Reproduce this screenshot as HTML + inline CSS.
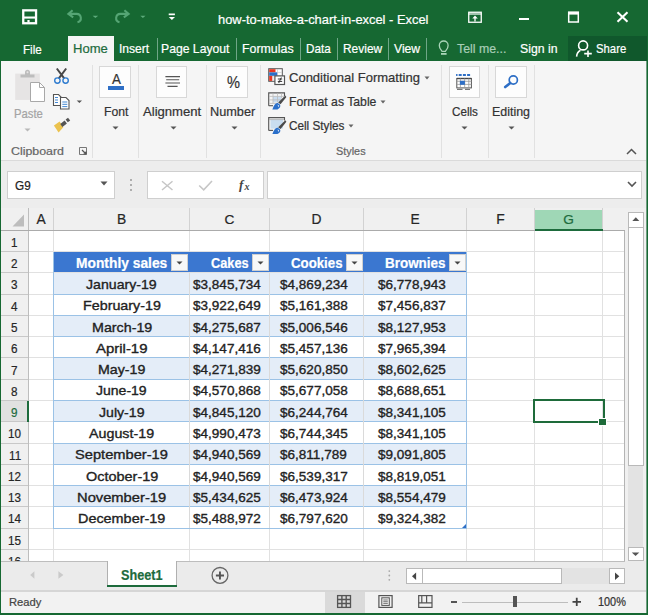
<!DOCTYPE html><html><head><meta charset="utf-8"><style>
html,body{margin:0;padding:0;width:648px;height:615px;overflow:hidden;background:#F3F3F3;}
body{position:relative;font-family:"Liberation Sans",sans-serif;}
span{white-space:pre;line-height:1;transform-origin:0 0;-webkit-text-stroke:0.22px currentColor;}
div,svg{position:absolute;}
</style></head><body>
<div style="position:absolute;left:0px;top:0px;width:648px;height:61px;background:#166832;"></div>
<span style="position:absolute;left:217.70px;top:14.20px;font-size:12.83px;color:#fff;transform:scaleX(1.0040);">how-to-make-a-chart-in-excel - Excel</span>
<div style="position:absolute;left:518.6px;top:17.8px;width:10.5px;height:2.599999999999998px;background:#fff;"></div>
<div style="position:absolute;left:68px;top:36px;width:46px;height:26px;background:#F5F5F5;"></div>
<span style="position:absolute;left:23.00px;top:43.00px;font-size:13.60px;color:#fff;transform:scaleX(0.8573);">File</span>
<span style="position:absolute;left:73.00px;top:42.00px;font-size:13.60px;color:#1D6B3C;transform:scaleX(0.9593);">Home</span>
<span style="position:absolute;left:119.30px;top:42.00px;font-size:13.60px;color:#fff;transform:scaleX(0.8882);">Insert</span>
<span style="position:absolute;left:161.20px;top:42.00px;font-size:13.60px;color:#fff;transform:scaleX(0.8970);">Page Layout</span>
<span style="position:absolute;left:241.70px;top:42.00px;font-size:13.60px;color:#fff;transform:scaleX(0.9104);">Formulas</span>
<span style="position:absolute;left:305.60px;top:42.00px;font-size:13.60px;color:#fff;transform:scaleX(0.8597);">Data</span>
<span style="position:absolute;left:342.70px;top:42.00px;font-size:13.60px;color:#fff;transform:scaleX(0.8781);">Review</span>
<span style="position:absolute;left:393.60px;top:42.00px;font-size:13.60px;color:#fff;transform:scaleX(0.8950);">View</span>
<div style="position:absolute;left:156.5px;top:38px;width:1.0px;height:22px;background:#6FA687;"></div>
<div style="position:absolute;left:236px;top:38px;width:1px;height:22px;background:#6FA687;"></div>
<div style="position:absolute;left:300.4px;top:38px;width:1.0px;height:22px;background:#6FA687;"></div>
<div style="position:absolute;left:336.5px;top:38px;width:1.0px;height:22px;background:#6FA687;"></div>
<div style="position:absolute;left:388px;top:38px;width:1px;height:22px;background:#6FA687;"></div>
<div style="position:absolute;left:425.8px;top:38px;width:1.0px;height:22px;background:#6FA687;"></div>
<span style="position:absolute;left:456.50px;top:42.00px;font-size:13.60px;color:#A8CDB6;transform:scaleX(0.9081);">Tell me...</span>
<span style="position:absolute;left:519.60px;top:42.00px;font-size:13.60px;color:#fff;transform:scaleX(0.9042);">Sign in</span>
<div style="position:absolute;left:568px;top:36px;width:79px;height:25px;background:#10582C;"></div>
<span style="position:absolute;left:596.30px;top:42.00px;font-size:13.60px;color:#fff;transform:scaleX(0.8325);">Share</span>
<div style="position:absolute;left:0px;top:61px;width:648px;height:554px;background:#F5F5F5;"></div>
<div style="position:absolute;left:0px;top:61px;width:1px;height:554px;background:#166832;"></div>
<div style="position:absolute;left:646px;top:61px;width:1px;height:554px;background:#6E9E80;"></div>
<div style="position:absolute;left:647px;top:61px;width:1px;height:554px;background:#166832;"></div>
<div style="position:absolute;left:0px;top:613px;width:648px;height:2px;background:#166832;"></div>
<span style="position:absolute;left:13.50px;top:106.50px;font-size:13.20px;color:#A4A4A4;transform:scaleX(0.8561);">Paste</span>
<svg style="position:absolute;left:24px;top:128px" width="7" height="4" viewBox="0 0 7 4"><path d="M0.5 0.5h6l-3 3z" fill="#B8B8B8"/></svg>
<span style="position:absolute;left:11.20px;top:144.50px;font-size:11.70px;color:#666;transform:scaleX(1.0584);">Clipboard</span>
<svg style="position:absolute;left:79px;top:147px" width="8" height="8" viewBox="0 0 8 8"><path d="M0.5 0.5h7v7h-7z" fill="none" stroke="#777" stroke-width="1"/><path d="M3 3l4 4M4.5 7h2.5v-2.5" fill="none" stroke="#555" stroke-width="1.2"/></svg>
<div style="position:absolute;left:91.5px;top:65px;width:1.0px;height:93px;background:#E1E1E1;"></div>
<div style="position:absolute;left:138px;top:65px;width:1px;height:93px;background:#E1E1E1;"></div>
<div style="position:absolute;left:206px;top:65px;width:1px;height:93px;background:#E1E1E1;"></div>
<div style="position:absolute;left:260px;top:65px;width:1px;height:93px;background:#E1E1E1;"></div>
<div style="position:absolute;left:440.5px;top:65px;width:1.0px;height:93px;background:#E1E1E1;"></div>
<div style="position:absolute;left:487.5px;top:65px;width:1.0px;height:93px;background:#E1E1E1;"></div>
<div style="position:absolute;left:534px;top:65px;width:1px;height:93px;background:#E1E1E1;"></div>
<div style="position:absolute;left:99px;top:66px;width:32px;height:32px;background:#FDFDFD;border:1px solid #D8D8D8;box-sizing:border-box;"></div>
<span style="position:absolute;left:112.00px;top:71.40px;font-size:15.42px;color:#333;transform:scaleX(0.8648);">A</span>
<div style="position:absolute;left:107.6px;top:86.3px;width:16.900000000000006px;height:3.700000000000003px;background:#2E6FC6;"></div>
<span style="position:absolute;left:103.80px;top:104.80px;font-size:13.20px;color:#333;transform:scaleX(0.9242);">Font</span>
<svg style="position:absolute;left:112px;top:126px" width="7" height="4" viewBox="0 0 7 4"><path d="M0.5 0.5h6l-3 3z" fill="#555"/></svg>
<div style="position:absolute;left:155.5px;top:66px;width:31.0px;height:32px;background:#FDFDFD;border:1px solid #D8D8D8;box-sizing:border-box;"></div>
<span style="position:absolute;left:142.80px;top:104.70px;font-size:13.20px;color:#333;transform:scaleX(0.9931);">Alignment</span>
<svg style="position:absolute;left:170px;top:126px" width="7" height="4" viewBox="0 0 7 4"><path d="M0.5 0.5h6l-3 3z" fill="#555"/></svg>
<div style="position:absolute;left:216px;top:66px;width:32px;height:32px;background:#FDFDFD;border:1px solid #D8D8D8;box-sizing:border-box;"></div>
<span style="position:absolute;left:227.20px;top:75.00px;font-size:16.83px;color:#333;transform:scaleX(0.8677);">%</span>
<span style="position:absolute;left:210.40px;top:104.70px;font-size:13.20px;color:#333;transform:scaleX(0.9647);">Number</span>
<svg style="position:absolute;left:230.5px;top:126px" width="7" height="4" viewBox="0 0 7 4"><path d="M0.5 0.5h6l-3 3z" fill="#555"/></svg>
<span style="position:absolute;left:288.90px;top:70.80px;font-size:13.00px;color:#333;transform:scaleX(1.0009);">Conditional Formatting</span>
<svg style="position:absolute;left:423.5px;top:76px" width="6" height="4" viewBox="0 0 6 4"><path d="M0.5 0.5h5l-2.5 3z" fill="#666"/></svg>
<span style="position:absolute;left:288.90px;top:95.10px;font-size:13.00px;color:#333;transform:scaleX(0.9400);">Format as Table</span>
<svg style="position:absolute;left:380px;top:100px" width="6" height="4" viewBox="0 0 6 4"><path d="M0.5 0.5h5l-2.5 3z" fill="#666"/></svg>
<span style="position:absolute;left:288.90px;top:119.40px;font-size:13.00px;color:#333;transform:scaleX(0.9035);">Cell Styles</span>
<svg style="position:absolute;left:347.5px;top:124px" width="6" height="4" viewBox="0 0 6 4"><path d="M0.5 0.5h5l-2.5 3z" fill="#666"/></svg>
<span style="position:absolute;left:335.80px;top:144.90px;font-size:11.70px;color:#666;transform:scaleX(0.9293);">Styles</span>
<div style="position:absolute;left:448.5px;top:66px;width:31.5px;height:32px;background:#FDFDFD;border:1px solid #D8D8D8;box-sizing:border-box;"></div>
<span style="position:absolute;left:451.70px;top:104.60px;font-size:13.20px;color:#333;transform:scaleX(0.8828);">Cells</span>
<svg style="position:absolute;left:461px;top:126px" width="7" height="4" viewBox="0 0 7 4"><path d="M0.5 0.5h6l-3 3z" fill="#555"/></svg>
<div style="position:absolute;left:495px;top:66px;width:32px;height:32px;background:#FDFDFD;border:1px solid #D8D8D8;box-sizing:border-box;"></div>
<span style="position:absolute;left:492.00px;top:104.60px;font-size:13.20px;color:#333;transform:scaleX(0.9415);">Editing</span>
<svg style="position:absolute;left:508px;top:126px" width="7" height="4" viewBox="0 0 7 4"><path d="M0.5 0.5h6l-3 3z" fill="#555"/></svg>
<svg style="position:absolute;left:626px;top:148px" width="11" height="7" viewBox="0 0 11 7"><path d="M1 6l4.5-4.5L10 6" fill="none" stroke="#555" stroke-width="1.5"/></svg>
<div style="position:absolute;left:1px;top:160px;width:645px;height:1px;background:#DADADA;"></div>
<div style="position:absolute;left:1px;top:161px;width:645px;height:47px;background:#EDEDED;"></div>
<div style="position:absolute;left:7px;top:171px;width:108px;height:28px;background:#fff;border:1px solid #CFCFCF;box-sizing:border-box;"></div>
<span style="position:absolute;left:14.60px;top:179.40px;font-size:13.33px;color:#222;transform:scaleX(0.8820);">G9</span>
<svg style="position:absolute;left:100px;top:181px" width="8" height="5" viewBox="0 0 8 5"><path d="M0.5 0.5h7l-3.5 4z" fill="#555"/></svg>
<svg style="position:absolute;left:129px;top:178px" width="4" height="14" viewBox="0 0 4 14"><circle cx="2" cy="2" r="1" fill="#999"/><circle cx="2" cy="7" r="1" fill="#999"/><circle cx="2" cy="12" r="1" fill="#999"/></svg>
<div style="position:absolute;left:147px;top:171px;width:117px;height:28px;background:#fff;border:1px solid #CFCFCF;box-sizing:border-box;"></div>
<span style="position:absolute;left:239px;top:178px;font-family:'Liberation Serif';font-style:italic;font-weight:bold;font-size:13px;color:#444;-webkit-text-stroke:0;">f</span><span style="position:absolute;left:244.5px;top:182px;font-family:'Liberation Serif';font-style:italic;font-weight:bold;font-size:10px;color:#444;-webkit-text-stroke:0;">x</span>
<div style="position:absolute;left:267px;top:171px;width:375px;height:28px;background:#fff;border:1px solid #CFCFCF;box-sizing:border-box;"></div>
<svg style="position:absolute;left:627px;top:181px" width="10" height="7" viewBox="0 0 10 7"><path d="M1 1l4 4 4-4" fill="none" stroke="#555" stroke-width="1.6"/></svg>
<div style="position:absolute;left:1px;top:230px;width:623px;height:331px;background:#fff;"></div>
<div style="position:absolute;left:1px;top:208px;width:645px;height:22px;background:#F0F0F0;"></div>
<div style="position:absolute;left:1px;top:230px;width:27px;height:331px;background:#F0F0F0;"></div>
<div style="position:absolute;left:53px;top:231px;width:1px;height:330px;background:#E1E1E1;"></div>
<div style="position:absolute;left:53px;top:208px;width:1px;height:22px;background:#D2D2D2;"></div>
<div style="position:absolute;left:189px;top:231px;width:1px;height:330px;background:#E1E1E1;"></div>
<div style="position:absolute;left:189px;top:208px;width:1px;height:22px;background:#D2D2D2;"></div>
<div style="position:absolute;left:269px;top:231px;width:1px;height:330px;background:#E1E1E1;"></div>
<div style="position:absolute;left:269px;top:208px;width:1px;height:22px;background:#D2D2D2;"></div>
<div style="position:absolute;left:363px;top:231px;width:1px;height:330px;background:#E1E1E1;"></div>
<div style="position:absolute;left:363px;top:208px;width:1px;height:22px;background:#D2D2D2;"></div>
<div style="position:absolute;left:466px;top:231px;width:1px;height:330px;background:#E1E1E1;"></div>
<div style="position:absolute;left:466px;top:208px;width:1px;height:22px;background:#D2D2D2;"></div>
<div style="position:absolute;left:534px;top:231px;width:1px;height:330px;background:#E1E1E1;"></div>
<div style="position:absolute;left:534px;top:208px;width:1px;height:22px;background:#D2D2D2;"></div>
<div style="position:absolute;left:602px;top:231px;width:1px;height:330px;background:#E1E1E1;"></div>
<div style="position:absolute;left:602px;top:208px;width:1px;height:22px;background:#D2D2D2;"></div>
<div style="position:absolute;left:28px;top:208px;width:1px;height:353px;background:#BDBDBD;"></div>
<div style="position:absolute;left:624px;top:230px;width:1px;height:331px;background:#B4B4B4;"></div>
<div style="position:absolute;left:29px;top:251px;width:595px;height:1px;background:#E1E1E1;"></div>
<div style="position:absolute;left:1px;top:251px;width:27px;height:1px;background:#C8C8C8;"></div>
<div style="position:absolute;left:29px;top:272px;width:595px;height:1px;background:#E1E1E1;"></div>
<div style="position:absolute;left:1px;top:272px;width:27px;height:1px;background:#C8C8C8;"></div>
<div style="position:absolute;left:29px;top:294px;width:595px;height:1px;background:#E1E1E1;"></div>
<div style="position:absolute;left:1px;top:294px;width:27px;height:1px;background:#C8C8C8;"></div>
<div style="position:absolute;left:29px;top:315px;width:595px;height:1px;background:#E1E1E1;"></div>
<div style="position:absolute;left:1px;top:315px;width:27px;height:1px;background:#C8C8C8;"></div>
<div style="position:absolute;left:29px;top:336px;width:595px;height:1px;background:#E1E1E1;"></div>
<div style="position:absolute;left:1px;top:336px;width:27px;height:1px;background:#C8C8C8;"></div>
<div style="position:absolute;left:29px;top:357px;width:595px;height:1px;background:#E1E1E1;"></div>
<div style="position:absolute;left:1px;top:357px;width:27px;height:1px;background:#C8C8C8;"></div>
<div style="position:absolute;left:29px;top:379px;width:595px;height:1px;background:#E1E1E1;"></div>
<div style="position:absolute;left:1px;top:379px;width:27px;height:1px;background:#C8C8C8;"></div>
<div style="position:absolute;left:29px;top:400px;width:595px;height:1px;background:#E1E1E1;"></div>
<div style="position:absolute;left:1px;top:400px;width:27px;height:1px;background:#C8C8C8;"></div>
<div style="position:absolute;left:29px;top:421px;width:595px;height:1px;background:#E1E1E1;"></div>
<div style="position:absolute;left:1px;top:421px;width:27px;height:1px;background:#C8C8C8;"></div>
<div style="position:absolute;left:29px;top:443px;width:595px;height:1px;background:#E1E1E1;"></div>
<div style="position:absolute;left:1px;top:443px;width:27px;height:1px;background:#C8C8C8;"></div>
<div style="position:absolute;left:29px;top:464px;width:595px;height:1px;background:#E1E1E1;"></div>
<div style="position:absolute;left:1px;top:464px;width:27px;height:1px;background:#C8C8C8;"></div>
<div style="position:absolute;left:29px;top:485px;width:595px;height:1px;background:#E1E1E1;"></div>
<div style="position:absolute;left:1px;top:485px;width:27px;height:1px;background:#C8C8C8;"></div>
<div style="position:absolute;left:29px;top:506px;width:595px;height:1px;background:#E1E1E1;"></div>
<div style="position:absolute;left:1px;top:506px;width:27px;height:1px;background:#C8C8C8;"></div>
<div style="position:absolute;left:29px;top:528px;width:595px;height:1px;background:#E1E1E1;"></div>
<div style="position:absolute;left:1px;top:528px;width:27px;height:1px;background:#C8C8C8;"></div>
<div style="position:absolute;left:29px;top:549px;width:595px;height:1px;background:#E1E1E1;"></div>
<div style="position:absolute;left:1px;top:549px;width:27px;height:1px;background:#C8C8C8;"></div>
<div style="position:absolute;left:29px;top:570px;width:595px;height:1px;background:#E1E1E1;"></div>
<div style="position:absolute;left:1px;top:570px;width:27px;height:1px;background:#C8C8C8;"></div>
<div style="position:absolute;left:1px;top:230px;width:624px;height:1px;background:#ABABAB;"></div>
<svg style="position:absolute;left:12px;top:214px" width="13" height="13" viewBox="0 0 13 13"><path d="M12 0.5v12h-11.5z" fill="#BDBDBD"/></svg>
<div style="position:absolute;left:535px;top:210px;width:67px;height:20px;background:#9FD7B6;"></div>
<div style="position:absolute;left:535px;top:229px;width:68px;height:2px;background:#1D6B3C;"></div>
<div style="position:absolute;left:1px;top:401px;width:27px;height:20px;background:#E1E1E1;"></div>
<div style="position:absolute;left:27px;top:401px;width:2px;height:21px;background:#1D6B3C;"></div>
<span style="position:absolute;left:36.39px;top:213.40px;font-size:13.82px;color:#262626;transform:scaleX(1.0000);">A</span>
<span style="position:absolute;left:116.89px;top:213.40px;font-size:13.82px;color:#262626;transform:scaleX(1.0000);">B</span>
<span style="position:absolute;left:224.58px;top:213.40px;font-size:13.62px;color:#262626;transform:scaleX(1.0000);">C</span>
<span style="position:absolute;left:311.51px;top:213.40px;font-size:13.82px;color:#262626;transform:scaleX(1.0000);">D</span>
<span style="position:absolute;left:410.39px;top:213.40px;font-size:13.82px;color:#262626;transform:scaleX(1.0000);">E</span>
<span style="position:absolute;left:496.29px;top:213.40px;font-size:13.82px;color:#262626;transform:scaleX(1.0000);">F</span>
<span style="position:absolute;left:563.21px;top:213.40px;font-size:13.62px;color:#1D6B3C;transform:scaleX(1.0000);">G</span>
<span style="position:absolute;left:11.05px;top:235.82px;font-size:13.60px;color:#262626;transform:scaleX(0.8600);">1</span>
<span style="position:absolute;left:11.05px;top:257.10px;font-size:13.60px;color:#262626;transform:scaleX(0.8600);">2</span>
<span style="position:absolute;left:11.05px;top:278.38px;font-size:13.60px;color:#262626;transform:scaleX(0.8600);">3</span>
<span style="position:absolute;left:11.05px;top:299.66px;font-size:13.60px;color:#262626;transform:scaleX(0.8600);">4</span>
<span style="position:absolute;left:11.05px;top:320.94px;font-size:13.60px;color:#262626;transform:scaleX(0.8600);">5</span>
<span style="position:absolute;left:11.05px;top:342.22px;font-size:13.60px;color:#262626;transform:scaleX(0.8600);">6</span>
<span style="position:absolute;left:11.05px;top:363.50px;font-size:13.60px;color:#262626;transform:scaleX(0.8600);">7</span>
<span style="position:absolute;left:11.05px;top:384.78px;font-size:13.60px;color:#262626;transform:scaleX(0.8600);">8</span>
<span style="position:absolute;left:11.05px;top:406.06px;font-size:13.60px;color:#1D6B3C;transform:scaleX(0.8600);">9</span>
<span style="position:absolute;left:8.49px;top:427.34px;font-size:13.60px;color:#262626;transform:scaleX(0.8600);">10</span>
<span style="position:absolute;left:8.93px;top:448.62px;font-size:13.60px;color:#262626;transform:scaleX(0.8600);">11</span>
<span style="position:absolute;left:8.49px;top:469.90px;font-size:13.60px;color:#262626;transform:scaleX(0.8600);">12</span>
<span style="position:absolute;left:8.49px;top:491.18px;font-size:13.60px;color:#262626;transform:scaleX(0.8600);">13</span>
<span style="position:absolute;left:8.49px;top:512.46px;font-size:13.60px;color:#262626;transform:scaleX(0.8600);">14</span>
<span style="position:absolute;left:8.49px;top:533.74px;font-size:13.60px;color:#262626;transform:scaleX(0.8600);">15</span>
<span style="position:absolute;left:8.49px;top:555.02px;font-size:13.60px;color:#262626;transform:scaleX(0.8600);">16</span>
<div style="position:absolute;left:53px;top:252px;width:414px;height:20px;background:#3B77D0;"></div>
<div style="position:absolute;left:53px;top:273px;width:414px;height:21px;background:#E4EDF8;"></div>
<div style="position:absolute;left:53px;top:294px;width:414px;height:1px;background:#9BC2E6;"></div>
<div style="position:absolute;left:53px;top:295px;width:414px;height:20px;background:#FFFFFF;"></div>
<div style="position:absolute;left:53px;top:315px;width:414px;height:1px;background:#9BC2E6;"></div>
<div style="position:absolute;left:53px;top:316px;width:414px;height:20px;background:#E4EDF8;"></div>
<div style="position:absolute;left:53px;top:336px;width:414px;height:1px;background:#9BC2E6;"></div>
<div style="position:absolute;left:53px;top:337px;width:414px;height:20px;background:#FFFFFF;"></div>
<div style="position:absolute;left:53px;top:357px;width:414px;height:1px;background:#9BC2E6;"></div>
<div style="position:absolute;left:53px;top:358px;width:414px;height:21px;background:#E4EDF8;"></div>
<div style="position:absolute;left:53px;top:379px;width:414px;height:1px;background:#9BC2E6;"></div>
<div style="position:absolute;left:53px;top:380px;width:414px;height:20px;background:#FFFFFF;"></div>
<div style="position:absolute;left:53px;top:400px;width:414px;height:1px;background:#9BC2E6;"></div>
<div style="position:absolute;left:53px;top:401px;width:414px;height:20px;background:#E4EDF8;"></div>
<div style="position:absolute;left:53px;top:421px;width:414px;height:1px;background:#9BC2E6;"></div>
<div style="position:absolute;left:53px;top:422px;width:414px;height:21px;background:#FFFFFF;"></div>
<div style="position:absolute;left:53px;top:443px;width:414px;height:1px;background:#9BC2E6;"></div>
<div style="position:absolute;left:53px;top:444px;width:414px;height:20px;background:#E4EDF8;"></div>
<div style="position:absolute;left:53px;top:464px;width:414px;height:1px;background:#9BC2E6;"></div>
<div style="position:absolute;left:53px;top:465px;width:414px;height:20px;background:#FFFFFF;"></div>
<div style="position:absolute;left:53px;top:485px;width:414px;height:1px;background:#9BC2E6;"></div>
<div style="position:absolute;left:53px;top:486px;width:414px;height:20px;background:#E4EDF8;"></div>
<div style="position:absolute;left:53px;top:506px;width:414px;height:1px;background:#9BC2E6;"></div>
<div style="position:absolute;left:53px;top:507px;width:414px;height:21px;background:#FFFFFF;"></div>
<div style="position:absolute;left:53px;top:528px;width:414px;height:1px;background:#9BC2E6;"></div>
<div style="position:absolute;left:189px;top:273px;width:1px;height:255px;background:#DADADA;"></div>
<div style="position:absolute;left:269px;top:273px;width:1px;height:255px;background:#DADADA;"></div>
<div style="position:absolute;left:363px;top:273px;width:1px;height:255px;background:#DADADA;"></div>
<div style="position:absolute;left:53px;top:252px;width:1px;height:277px;background:#9BC2E6;"></div>
<div style="position:absolute;left:466px;top:252px;width:1px;height:277px;background:#9BC2E6;"></div>
<span style="position:absolute;left:75.90px;top:256.20px;font-size:14.30px;color:#fff;font-weight:bold;transform:scaleX(0.9655);">Monthly sales</span>
<span style="position:absolute;left:210.70px;top:256.20px;font-size:14.30px;color:#fff;font-weight:bold;transform:scaleX(0.8921);">Cakes</span>
<span style="position:absolute;left:291.00px;top:256.20px;font-size:14.30px;color:#fff;font-weight:bold;transform:scaleX(0.9258);">Cookies</span>
<span style="position:absolute;left:384.80px;top:256.20px;font-size:14.30px;color:#fff;font-weight:bold;transform:scaleX(0.9402);">Brownies</span>
<div style="position:absolute;left:171px;top:254px;width:17px;height:17px;background:#F8F8F8;border:1px solid #D0D0D0;box-sizing:border-box;"></div>
<svg style="position:absolute;left:176px;top:261px" width="7" height="4" viewBox="0 0 7 4"><path d="M0.5 0.5h6l-3 3z" fill="#444"/></svg>
<div style="position:absolute;left:252px;top:254px;width:17px;height:17px;background:#F8F8F8;border:1px solid #D0D0D0;box-sizing:border-box;"></div>
<svg style="position:absolute;left:257px;top:261px" width="7" height="4" viewBox="0 0 7 4"><path d="M0.5 0.5h6l-3 3z" fill="#444"/></svg>
<div style="position:absolute;left:346px;top:254px;width:17px;height:17px;background:#F8F8F8;border:1px solid #D0D0D0;box-sizing:border-box;"></div>
<svg style="position:absolute;left:351px;top:261px" width="7" height="4" viewBox="0 0 7 4"><path d="M0.5 0.5h6l-3 3z" fill="#444"/></svg>
<div style="position:absolute;left:449px;top:254px;width:17px;height:17px;background:#F8F8F8;border:1px solid #D0D0D0;box-sizing:border-box;"></div>
<svg style="position:absolute;left:454px;top:261px" width="7" height="4" viewBox="0 0 7 4"><path d="M0.5 0.5h6l-3 3z" fill="#444"/></svg>
<span style="position:absolute;left:85.80px;top:278.08px;font-size:13.48px;color:#222;transform:scaleX(1.0487);-webkit-text-stroke:0.35px currentColor;">January-19</span>
<span style="position:absolute;left:192.80px;top:278.08px;font-size:13.48px;color:#222;transform:scaleX(1.0052);-webkit-text-stroke:0.35px currentColor;">$3,845,734</span>
<span style="position:absolute;left:279.60px;top:278.08px;font-size:13.48px;color:#222;transform:scaleX(1.0052);-webkit-text-stroke:0.35px currentColor;">$4,869,234</span>
<span style="position:absolute;left:378.30px;top:278.08px;font-size:13.48px;color:#222;transform:scaleX(1.0052);-webkit-text-stroke:0.35px currentColor;">$6,778,943</span>
<span style="position:absolute;left:82.70px;top:299.36px;font-size:13.48px;color:#222;transform:scaleX(1.0611);-webkit-text-stroke:0.35px currentColor;">February-19</span>
<span style="position:absolute;left:192.80px;top:299.36px;font-size:13.48px;color:#222;transform:scaleX(1.0052);-webkit-text-stroke:0.35px currentColor;">$3,922,649</span>
<span style="position:absolute;left:279.60px;top:299.36px;font-size:13.48px;color:#222;transform:scaleX(1.0052);-webkit-text-stroke:0.35px currentColor;">$5,161,388</span>
<span style="position:absolute;left:378.30px;top:299.36px;font-size:13.48px;color:#222;transform:scaleX(1.0052);-webkit-text-stroke:0.35px currentColor;">$7,456,837</span>
<span style="position:absolute;left:91.60px;top:320.64px;font-size:13.48px;color:#222;transform:scaleX(1.0597);-webkit-text-stroke:0.35px currentColor;">March-19</span>
<span style="position:absolute;left:192.80px;top:320.64px;font-size:13.48px;color:#222;transform:scaleX(1.0052);-webkit-text-stroke:0.35px currentColor;">$4,275,687</span>
<span style="position:absolute;left:279.60px;top:320.64px;font-size:13.48px;color:#222;transform:scaleX(1.0052);-webkit-text-stroke:0.35px currentColor;">$5,006,546</span>
<span style="position:absolute;left:378.30px;top:320.64px;font-size:13.48px;color:#222;transform:scaleX(1.0052);-webkit-text-stroke:0.35px currentColor;">$8,127,953</span>
<span style="position:absolute;left:96.20px;top:341.92px;font-size:13.48px;color:#222;transform:scaleX(1.1093);-webkit-text-stroke:0.35px currentColor;">April-19</span>
<span style="position:absolute;left:192.80px;top:341.92px;font-size:13.48px;color:#222;transform:scaleX(1.0052);-webkit-text-stroke:0.35px currentColor;">$4,147,416</span>
<span style="position:absolute;left:279.60px;top:341.92px;font-size:13.48px;color:#222;transform:scaleX(1.0052);-webkit-text-stroke:0.35px currentColor;">$5,457,136</span>
<span style="position:absolute;left:378.30px;top:341.92px;font-size:13.48px;color:#222;transform:scaleX(1.0052);-webkit-text-stroke:0.35px currentColor;">$7,965,394</span>
<span style="position:absolute;left:98.30px;top:363.20px;font-size:13.48px;color:#222;transform:scaleX(1.0546);-webkit-text-stroke:0.35px currentColor;">May-19</span>
<span style="position:absolute;left:192.80px;top:363.20px;font-size:13.48px;color:#222;transform:scaleX(1.0052);-webkit-text-stroke:0.35px currentColor;">$4,271,839</span>
<span style="position:absolute;left:279.60px;top:363.20px;font-size:13.48px;color:#222;transform:scaleX(1.0052);-webkit-text-stroke:0.35px currentColor;">$5,620,850</span>
<span style="position:absolute;left:378.30px;top:363.20px;font-size:13.48px;color:#222;transform:scaleX(1.0052);-webkit-text-stroke:0.35px currentColor;">$8,602,625</span>
<span style="position:absolute;left:95.80px;top:384.48px;font-size:13.48px;color:#222;transform:scaleX(1.0407);-webkit-text-stroke:0.35px currentColor;">June-19</span>
<span style="position:absolute;left:192.80px;top:384.48px;font-size:13.48px;color:#222;transform:scaleX(1.0052);-webkit-text-stroke:0.35px currentColor;">$4,570,868</span>
<span style="position:absolute;left:279.60px;top:384.48px;font-size:13.48px;color:#222;transform:scaleX(1.0052);-webkit-text-stroke:0.35px currentColor;">$5,677,058</span>
<span style="position:absolute;left:378.30px;top:384.48px;font-size:13.48px;color:#222;transform:scaleX(1.0052);-webkit-text-stroke:0.35px currentColor;">$8,688,651</span>
<span style="position:absolute;left:98.80px;top:405.76px;font-size:13.48px;color:#222;transform:scaleX(1.0477);-webkit-text-stroke:0.35px currentColor;">July-19</span>
<span style="position:absolute;left:192.80px;top:405.76px;font-size:13.48px;color:#222;transform:scaleX(1.0052);-webkit-text-stroke:0.35px currentColor;">$4,845,120</span>
<span style="position:absolute;left:279.60px;top:405.76px;font-size:13.48px;color:#222;transform:scaleX(1.0052);-webkit-text-stroke:0.35px currentColor;">$6,244,764</span>
<span style="position:absolute;left:378.30px;top:405.76px;font-size:13.48px;color:#222;transform:scaleX(1.0052);-webkit-text-stroke:0.35px currentColor;">$8,341,105</span>
<span style="position:absolute;left:88.70px;top:427.04px;font-size:13.48px;color:#222;transform:scaleX(1.0599);-webkit-text-stroke:0.35px currentColor;">August-19</span>
<span style="position:absolute;left:192.80px;top:427.04px;font-size:13.48px;color:#222;transform:scaleX(1.0052);-webkit-text-stroke:0.35px currentColor;">$4,990,473</span>
<span style="position:absolute;left:279.60px;top:427.04px;font-size:13.48px;color:#222;transform:scaleX(1.0052);-webkit-text-stroke:0.35px currentColor;">$6,744,345</span>
<span style="position:absolute;left:378.30px;top:427.04px;font-size:13.48px;color:#222;transform:scaleX(1.0052);-webkit-text-stroke:0.35px currentColor;">$8,341,105</span>
<span style="position:absolute;left:74.50px;top:448.32px;font-size:13.48px;color:#222;transform:scaleX(1.0889);-webkit-text-stroke:0.35px currentColor;">September-19</span>
<span style="position:absolute;left:192.80px;top:448.32px;font-size:13.48px;color:#222;transform:scaleX(1.0052);-webkit-text-stroke:0.35px currentColor;">$4,940,569</span>
<span style="position:absolute;left:280.11px;top:448.32px;font-size:13.48px;color:#222;transform:scaleX(1.0052);-webkit-text-stroke:0.35px currentColor;">$6,811,789</span>
<span style="position:absolute;left:378.30px;top:448.32px;font-size:13.48px;color:#222;transform:scaleX(1.0052);-webkit-text-stroke:0.35px currentColor;">$9,091,805</span>
<span style="position:absolute;left:85.70px;top:469.60px;font-size:13.48px;color:#222;transform:scaleX(1.0724);-webkit-text-stroke:0.35px currentColor;">October-19</span>
<span style="position:absolute;left:192.80px;top:469.60px;font-size:13.48px;color:#222;transform:scaleX(1.0052);-webkit-text-stroke:0.35px currentColor;">$4,940,569</span>
<span style="position:absolute;left:279.60px;top:469.60px;font-size:13.48px;color:#222;transform:scaleX(1.0052);-webkit-text-stroke:0.35px currentColor;">$6,539,317</span>
<span style="position:absolute;left:378.30px;top:469.60px;font-size:13.48px;color:#222;transform:scaleX(1.0052);-webkit-text-stroke:0.35px currentColor;">$8,819,051</span>
<span style="position:absolute;left:77.30px;top:490.88px;font-size:13.48px;color:#222;transform:scaleX(1.0927);-webkit-text-stroke:0.35px currentColor;">November-19</span>
<span style="position:absolute;left:192.80px;top:490.88px;font-size:13.48px;color:#222;transform:scaleX(1.0052);-webkit-text-stroke:0.35px currentColor;">$5,434,625</span>
<span style="position:absolute;left:279.60px;top:490.88px;font-size:13.48px;color:#222;transform:scaleX(1.0052);-webkit-text-stroke:0.35px currentColor;">$6,473,924</span>
<span style="position:absolute;left:378.30px;top:490.88px;font-size:13.48px;color:#222;transform:scaleX(1.0052);-webkit-text-stroke:0.35px currentColor;">$8,554,479</span>
<span style="position:absolute;left:78.10px;top:512.16px;font-size:13.48px;color:#222;transform:scaleX(1.0694);-webkit-text-stroke:0.35px currentColor;">December-19</span>
<span style="position:absolute;left:192.80px;top:512.16px;font-size:13.48px;color:#222;transform:scaleX(1.0052);-webkit-text-stroke:0.35px currentColor;">$5,488,972</span>
<span style="position:absolute;left:279.60px;top:512.16px;font-size:13.48px;color:#222;transform:scaleX(1.0052);-webkit-text-stroke:0.35px currentColor;">$6,797,620</span>
<span style="position:absolute;left:378.30px;top:512.16px;font-size:13.48px;color:#222;transform:scaleX(1.0052);-webkit-text-stroke:0.35px currentColor;">$9,324,382</span>
<svg style="position:absolute;left:462px;top:524px" width="4" height="4" viewBox="0 0 4 4"><path d="M4 0v4h-4z" fill="#2E6FC6"/></svg>
<div style="position:absolute;left:533px;top:399px;width:72px;height:24px;background:transparent;border:2px solid #1E6B3A;box-sizing:border-box;"></div>
<div style="position:absolute;left:598px;top:418px;width:9px;height:8px;background:#fff;"></div>
<div style="position:absolute;left:599px;top:419px;width:7px;height:6px;background:#1E6B3A;"></div>
<div style="position:absolute;left:625px;top:208px;width:21px;height:353px;background:#F0F0F0;"></div>
<div style="position:absolute;left:628px;top:227px;width:15px;height:320px;background:#E3E3E3;"></div>
<div style="position:absolute;left:628px;top:212px;width:16px;height:16px;background:#fff;border:1px solid #B9B9B9;box-sizing:border-box;"></div>
<div style="position:absolute;left:628px;top:227px;width:16px;height:239px;background:#fff;border:1px solid #B9B9B9;box-sizing:border-box;"></div>
<div style="position:absolute;left:628px;top:547px;width:16px;height:14px;background:#fff;border:1px solid #B9B9B9;box-sizing:border-box;"></div>
<div style="position:absolute;left:1px;top:561px;width:645px;height:29px;background:#EBEBEB;"></div>
<div style="position:absolute;left:1px;top:561px;width:624px;height:1px;background:#BDBDBD;"></div>
<div style="position:absolute;left:107px;top:561px;width:70px;height:26px;background:#fff;border-left:1px solid #B0B0B0;border-right:1px solid #B0B0B0;box-sizing:border-box;"></div>
<div style="position:absolute;left:107px;top:585px;width:70px;height:2.2999999999999545px;background:#1D6B3C;"></div>
<span style="position:absolute;left:120.50px;top:567.80px;font-size:14.62px;color:#1D6B3C;font-weight:bold;transform:scaleX(0.8675);">Sheet1</span>
<div style="position:absolute;left:562px;top:568px;width:47px;height:16px;background:#E3E3E3;"></div>
<div style="position:absolute;left:406px;top:568px;width:17px;height:16px;background:#fff;border:1px solid #B9B9B9;box-sizing:border-box;"></div>
<div style="position:absolute;left:422px;top:568px;width:140px;height:16px;background:#fff;border:1px solid #B9B9B9;box-sizing:border-box;"></div>
<div style="position:absolute;left:609px;top:568px;width:16px;height:16px;background:#fff;border:1px solid #B9B9B9;box-sizing:border-box;"></div>
<div style="position:absolute;left:1px;top:590px;width:645px;height:2px;background:#D6D6D6;"></div>
<div style="position:absolute;left:1px;top:592px;width:645px;height:21px;background:#F2F2F2;"></div>
<span style="position:absolute;left:8.80px;top:597.00px;font-size:11.03px;color:#444;transform:scaleX(1.0160);">Ready</span>
<div style="position:absolute;left:325px;top:592px;width:40px;height:21px;background:#DADADA;"></div>
<div style="position:absolute;left:451.3px;top:601px;width:6.0px;height:2px;background:#555;"></div>
<div style="position:absolute;left:461.8px;top:601.5px;width:106.19999999999999px;height:1.0px;background:#BDBDBD;"></div>
<div style="position:absolute;left:513.2px;top:595.6px;width:3.7999999999999545px;height:11.899999999999977px;background:#555;"></div>
<span style="position:absolute;left:598.10px;top:596.20px;font-size:12.04px;color:#333;transform:scaleX(0.9058);">100%</span>
<svg style="position:absolute;left:0;top:0" width="648" height="615"><rect x="23.25" y="10.35" width="12.8" height="12.9" fill="none" stroke="#fff" stroke-width="2.3"/><rect x="24" y="16.5" width="11.5" height="2.1" fill="#fff"/><rect x="27.4" y="20" width="2.2" height="2.6" fill="#fff"/><path d="M68.8 13.9H76.5A4.25 4.25 0 0 1 77.5 22.3" fill="none" stroke="#55A574" stroke-width="2.1"/><path d="M72.6 10.3L68.4 13.9L73.2 17.3" fill="none" stroke="#55A574" stroke-width="2.1"/><path d="M92.6 15.8h5.6l-2.8 2.3z" fill="#5DAA7B"/><path d="M140.3 15.8h5.2l-2.6 2.3z" fill="#5DAA7B"/><path d="M128.2 13.9H120.5A4.25 4.25 0 0 0 119.5 22.3" fill="none" stroke="#55A574" stroke-width="2.1"/><path d="M124.4 10.3L128.6 13.9L123.8 17.3" fill="none" stroke="#55A574" stroke-width="2.1"/><rect x="168.7" y="13.5" width="6.2" height="1.7" fill="#fff"/><path d="M168.8 17h6.2l-3.1 3z" fill="#fff"/><rect x="468.75" y="12.25" width="12.5" height="10" fill="none" stroke="#fff" stroke-width="1.3"/><path d="M468.5 14h13" stroke="#fff" stroke-width="1.2"/><path d="M472.3 18.6L475 15.6L477.8 18.6z" fill="#fff"/><path d="M475 18v3.5" stroke="#fff" stroke-width="1.3"/><rect x="568.7" y="12.4" width="9.6" height="9.6" fill="none" stroke="#fff" stroke-width="1.5"/><rect x="568" y="11.6" width="11" height="3" fill="#fff"/><path d="M617.5 12.3l10 9.4M627.5 12.3l-10 9.4" stroke="#fff" stroke-width="2.1"/><path d="M442 51.3C440.7 49.4 439.3 48.3 439.3 45.4A4.4 4.4 0 0 1 448.1 45.4C448.1 48.3 446.7 49.4 445.4 51.3Z" fill="none" stroke="#A9D5B8" stroke-width="1.3"/><path d="M441 53.9h5.6" stroke="#A9D5B8" stroke-width="1.8"/><circle cx="583.1" cy="45.4" r="4.5" fill="none" stroke="#fff" stroke-width="1.6"/><path d="M580.5 50.2C578.3 51.2 576.8 53.5 576.6 56.6" fill="none" stroke="#fff" stroke-width="1.6"/><path d="M584.2 53.6h7.6M588 50.6v6.3" stroke="#fff" stroke-width="1.6"/><rect x="15.2" y="73.6" width="24.6" height="26.3" fill="#E6E4E4"/><path d="M20.5 77.5v-3h4.5v-2.3a2.5 2.5 0 0 1 5 0v2.3h4.5v3z" fill="#BDBDBD"/><circle cx="27.5" cy="72.3" r="1" fill="#E6E4E4"/><path d="M30.5 82.5h9l5 5v14h-14z" fill="#FFFFFF" stroke="#A8A8A8" stroke-width="1"/><path d="M39.5 82.5v5h5" fill="none" stroke="#A8A8A8"/><path d="M56.8 68.5L64.2 78.3M66.2 68.5L58.8 78.3" stroke="#474747" stroke-width="2"/><circle cx="57.4" cy="80.6" r="2.7" fill="none" stroke="#2E7BCF" stroke-width="1.4"/><circle cx="65.6" cy="80.6" r="2.7" fill="none" stroke="#2E7BCF" stroke-width="1.4"/><path d="M53.5 94.5h5l2.5 2.5v8.5h-7.5z" fill="#fff" stroke="#555" stroke-width="1.1"/><path d="M55 97.5h3M55 100h3M55 102.5h3" stroke="#2E7BCF" stroke-width="0.9"/><path d="M60.5 97.5h5.5l3 3v8.5h-8.5z" fill="#fff" stroke="#555" stroke-width="1.1"/><path d="M62.3 102h5M62.3 104.3h5M62.3 106.6h5" stroke="#2E7BCF" stroke-width="0.9"/><path d="M76.7 100.5h5.3l-2.65 2.6z" fill="#555"/><path d="M53.9 125.6L59.6 121.6L63.3 127.2L58.6 132.5z" fill="#EBC24E"/><path d="M60.3 123.9L64.6 120.4L66.9 123.4L62.4 127z" fill="#555"/><path d="M65.6 119.4L68 117.7L70.2 120.4L67.8 122.2z" fill="#555"/><path d="M165.4 76.6h14.6M166.2 79.8h13M165.4 83h14.6M167.5 86.4h10.1" stroke="#555" stroke-width="1.1"/><rect x="268.7" y="68.7" width="13.6" height="12.6" fill="#fff" stroke="#555" stroke-width="1"/><path d="M273 69v12M277.5 69v12M269 72.4h13M269 76h13" stroke="#CFCFCF" stroke-width="0.8"/><rect x="269.2" y="69.2" width="6.3" height="3.1" fill="#E8351F"/><rect x="269.2" y="72.4" width="8" height="3.4" fill="#2A6FCA"/><rect x="269.2" y="75.9" width="3" height="5" fill="#E8351F"/><rect x="274.9" y="75.9" width="9.6" height="8.6" fill="#fff" stroke="#555" stroke-width="1.2"/><path d="M277.8 79h4.4M277.8 81.4h4.4M281.3 77.5l-2.6 5.5" stroke="#333" stroke-width="1"/><path d="M268.7 105.70 V92.90 H284.5 V95.90" fill="none" stroke="#555" stroke-width="1.1"/><path d="M268.7 105.70 H273" stroke="#555" stroke-width="1.1"/><rect x="273" y="96.40" width="8" height="6" fill="#C9DDF0"/><path d="M269 96.40 H284 M269 99.90 H282 M269 103.40 H277 M273 93.40 v10 M277.5 93.40 v9 M281.5 93.40 v5" stroke="#BBBBBB" stroke-width="0.8"/><path d="M285.3 95.60 L286.4 97.00 L280.6 104.30 L278.2 102.60 z" fill="#4A4A4A"/><path d="M277.8 103.00 C275.5 102.60 273.8 104.90 272.4 109.40 H277.5 C280 108.40 281 106.20 279.9 104.60 z" fill="#2A6FCA"/><path d="M277.6 104.60 L279.2 105.80 L278.2 107.20 z" fill="#fff" opacity=".85"/><path d="M268.7 130.40 V117.60 H284.5 V120.60" fill="none" stroke="#555" stroke-width="1.1"/><path d="M268.7 130.40 H273" stroke="#555" stroke-width="1.1"/><rect x="270.5" y="119.60" width="12.5" height="9" fill="#C9DDF0"/><path d="M269 119.60 H284" stroke="#AAAAAA" stroke-width="0.8"/><path d="M285.3 120.30 L286.4 121.70 L280.6 129.00 L278.2 127.30 z" fill="#4A4A4A"/><path d="M277.8 127.70 C275.5 127.30 273.8 129.60 272.4 134.10 H277.5 C280 133.10 281 130.90 279.9 129.30 z" fill="#2A6FCA"/><path d="M277.6 129.30 L279.2 130.50 L278.2 131.90 z" fill="#fff" opacity=".85"/><path d="M456.1 74.9H470.6" stroke="#2E6FC6" stroke-width="2" stroke-dasharray="1.4 1.2 3 1.2 3 1.2 3 1.2 1.4"/><rect x="456.8" y="78.5" width="14.6" height="9.4" fill="#fff" stroke="#555" stroke-width="1"/><path d="M456.8 78.5H471.4" stroke="#444" stroke-width="1.4"/><path d="M460.4 78.5v9.4M464.7 78.5v9.4M468.8 78.5v9.4M456.8 81.3h14.6M456.8 84.4h14.6" stroke="#999" stroke-width="0.8"/><rect x="459.9" y="80.8" width="5" height="4" fill="#2E6FC6"/><path d="M457 89.3h5.5M465 89.3h5" stroke="#777" stroke-width="1.2"/><circle cx="513.3" cy="80" r="4.1" fill="none" stroke="#2E6FC6" stroke-width="1.7"/><path d="M510.3 83L505.2 87" stroke="#2E6FC6" stroke-width="2.6" stroke-linecap="round"/><path d="M162 181.2l10.5 8.8M172.5 181.2L162 190" stroke="#C6C6C6" stroke-width="1.5"/><path d="M199.2 185.5l4.5 4.3L212 181" fill="none" stroke="#C6C6C6" stroke-width="1.6"/><path d="M632.3 220.9L635.8 217.2L639.3 220.9z" fill="#555"/><path d="M631.8 552.4H639.3L635.55 556z" fill="#555"/><path d="M34.4 571.3V578.7L30.2 575z" fill="#CACACA"/><path d="M58.4 571.3V578.7L63.4 575z" fill="#CACACA"/><circle cx="220" cy="575.4" r="7.9" fill="none" stroke="#666" stroke-width="1.3"/><path d="M215.9 575.5h8.1M219.95 571.5v8.1" stroke="#555" stroke-width="1.9"/><circle cx="389.3" cy="571.1" r="0.9" fill="#A8A8A8"/><circle cx="389.3" cy="575.5" r="0.9" fill="#A8A8A8"/><circle cx="389.3" cy="579.8" r="0.9" fill="#A8A8A8"/><path d="M416.1 572.5V580L412 576.25z" fill="#444"/><path d="M615 572.4V580L619.3 576.2z" fill="#444"/><rect x="337.6" y="595.6" width="12.9" height="11.8" fill="none" stroke="#555" stroke-width="1.3"/><path d="M341.9 595.6v11.8M346.2 595.6v11.8M337.6 599.5h12.9M337.6 603.5h12.9" stroke="#555" stroke-width="1.4"/><rect x="378.9" y="595.6" width="13.2" height="11.8" fill="none" stroke="#555" stroke-width="1.2"/><rect x="381.8" y="597.8" width="7.5" height="7.6" fill="none" stroke="#555" stroke-width="1"/><path d="M383.3 600h4.5M383.3 601.7h4.5M383.3 603.4h4.5" stroke="#555" stroke-width="0.8"/><rect x="418.7" y="595.6" width="13.3" height="11.8" fill="none" stroke="#555" stroke-width="1.2"/><path d="M418.7 602.8h13.3M421.8 595.6v7.2M426.6 595.6v7.2" stroke="#555" stroke-width="1.2"/><path d="M572.5 601.95h8.5M576.75 597.8v8.3" stroke="#444" stroke-width="1.8"/></svg>
</body></html>
